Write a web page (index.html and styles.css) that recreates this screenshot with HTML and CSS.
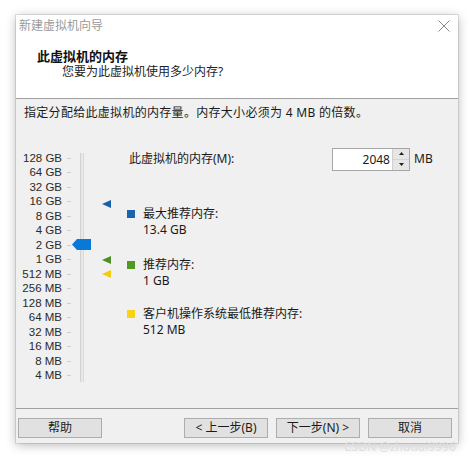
FILE: index.html
```html
<!DOCTYPE html>
<html lang="zh-CN">
<head>
<meta charset="utf-8">
<title>新建虚拟机向导</title>
<link rel="stylesheet" href="styles.css">
</head>
<body>
<div class="window">
  <div class="top">
    <div class="titlebar">
      <span class="title">新建虚拟机向导</span>
      <svg class="close" width="12" height="12" viewBox="0 0 12 12"><path d="M0.5 0.5 L11.5 11.5 M11.5 0.5 L0.5 11.5" stroke="#8a8a8a" stroke-width="1" fill="none"/></svg>
    </div>
    <div class="header">
      <div class="h1">此虚拟机的内存</div>
      <div class="h2">您要为此虚拟机使用多少内存?</div>
    </div>
  </div>
  <div class="body">
    <p class="intro">指定分配给此虚拟机的内存量。内存大小必须为 4 MB 的倍数。</p>
    <div class="main">
      <div class="scale">
        <ul class="labels">
          <li><span>128 GB</span></li>
          <li><span>64 GB</span></li>
          <li><span>32 GB</span></li>
          <li><span>16 GB</span></li>
          <li><span>8 GB</span></li>
          <li><span>4 GB</span></li>
          <li><span>2 GB</span></li>
          <li><span>1 GB</span></li>
          <li><span>512 MB</span></li>
          <li><span>256 MB</span></li>
          <li><span>128 MB</span></li>
          <li><span>64 MB</span></li>
          <li><span>32 MB</span></li>
          <li><span>16 MB</span></li>
          <li><span>8 MB</span></li>
          <li><span>4 MB</span></li>
        </ul>
        <div class="track"></div>
        <svg class="thumb" width="19" height="11" viewBox="0 0 19 11"><polygon points="0,5.5 5,0 19,0 19,11 5,11" fill="#0a78d6"/></svg>
        <svg class="mark mark-max" width="9" height="8" viewBox="0 0 9 8"><polygon points="0,4 9,0 9,8" fill="#1a5fa6"/></svg>
        <svg class="mark mark-rec" width="9" height="8" viewBox="0 0 9 8"><polygon points="0,4 9,0 9,8" fill="#4f8f22"/></svg>
        <svg class="mark mark-min" width="9" height="8" viewBox="0 0 9 8"><polygon points="0,4 9,0 9,8" fill="#f2cc12"/></svg>
      </div>
      <div class="info">
        <div class="memrow">
          <span class="memlabel">此虚拟机的内存(M):</span>
          <div class="spin">
            <span class="val">2048</span>
            <div class="btns">
              <span class="btn"><svg width="5" height="3" viewBox="0 0 5 3"><polygon points="0,3 2.5,0 5,3" fill="#222"/></svg></span>
              <span class="btn"><svg width="5" height="3" viewBox="0 0 5 3"><polygon points="0,0 5,0 2.5,3" fill="#222"/></svg></span>
            </div>
          </div>
          <span class="unit">MB</span>
        </div>
        <div class="legend l1"><span class="sq sq-blue"></span><span>最大推荐内存:</span><span class="v">13.4 GB</span></div>
        <div class="legend l2"><span class="sq sq-green"></span><span>推荐内存:</span><span class="v">1 GB</span></div>
        <div class="legend l3"><span class="sq sq-yellow"></span><span>客户机操作系统最低推荐内存:</span><span class="v">512 MB</span></div>
      </div>
    </div>
  </div>
  <div class="footer">
    <button class="b">帮助</button>
    <div class="nav">
      <button class="b">&lt; 上一步(B)</button>
      <button class="b">下一步(N) &gt;</button>
      <button class="b">取消</button>
    </div>
  </div>
</div>
<div class="watermark">CSDN @zhuuui9996</div>
</body>
</html>
```
FILE: styles.css
```css
html, body {
  margin: 0;
  padding: 0;
  background: #ffffff;
}
body {
  width: 474px;
  height: 462px;
  overflow: hidden;
  position: relative;
  font-family: "Noto Sans", "Noto Sans CJK SC", sans-serif;
  font-size: 12px;
  color: #1a1a1a;
}
.window {
  margin: 15px 0 0 16px;
  width: 442px;
  height: 428px;
  background: #f0f0f0;
  display: flex;
  flex-direction: column;
  box-shadow: 0 0 0 1px rgba(0,0,0,0.10), 0 2px 10px rgba(0,0,0,0.28);
  position: relative;
  z-index: 1;
}
.top {
  background: #ffffff;
  height: 84px;
  box-sizing: border-box;
  border-bottom: 1px solid #a0a0a0;
}
.titlebar {
  height: 22px;
  display: flex;
  align-items: center;
  justify-content: space-between;
  padding: 0 8px 0 3px;
}
.title {
  color: #9a9a9a;
  font-size: 12px;
  line-height: 16px;
}
.close {
  display: block;
}
.header {
  padding: 10px 0 0 21px;
}
.h1 {
  font-family: "Noto Sans CJK SC", sans-serif;
  font-weight: bold;
  font-size: 13px;
  line-height: 17px;
  color: #111;
}
.h2 {
  padding-left: 25px;
  line-height: 16px;
  color: #222;
}
.body {
  flex: 1;
}
.intro {
  margin: 0;
  padding: 6px 0 0 8px;
  line-height: 16px;
  letter-spacing: 0.3px;
}
.main {
  margin-top: 26px;
  display: flex;
}
.scale {
  position: relative;
  width: 111px;
  display: flex;
  align-items: flex-start;
}
.labels {
  list-style: none;
  margin: 0;
  padding: 3.75px 0 0 0;
  width: 55px;
  font-family: "Liberation Sans", Arial, sans-serif;
  font-size: 11.5px;
}
.labels li {
  height: 14.53px;
  display: flex;
  align-items: center;
  color: #2a2a2a;
}
.labels li span {
  width: 46px;
  text-align: right;
  line-height: 13px;
  white-space: nowrap;
}
.labels li::after {
  content: "";
  width: 4px;
  height: 1px;
  margin-left: 5px;
  background: #cfcfcf;
}
.track {
  margin: 5.7px 0 0 9px;
  width: 2px;
  height: 229px;
  background: #e8e8e8;
  border-left: 1px solid #d2d2d2;
  border-right: 1px solid #dadada;
}
.thumb {
  position: absolute;
  left: 56px;
  top: 92px;
}
.mark {
  position: absolute;
  left: 86px;
}
.mark-max { top: 53px; }
.mark-rec { top: 108.5px; }
.mark-min { top: 123px; }
.info {
  flex: 1;
  display: flex;
  flex-direction: column;
}
.memrow {
  height: 24px;
  display: flex;
  align-items: center;
}
.memlabel {
  margin-left: 2px;
  width: 203px;
  line-height: 16px;
}
.spin {
  width: 78px;
  height: 23px;
  box-sizing: border-box;
  border: 1px solid #a6a6a6;
  background: #ffffff;
  display: flex;
}
.val {
  flex: 1;
  text-align: right;
  padding-right: 2px;
  line-height: 21px;
}
.btns {
  width: 16px;
  display: flex;
  flex-direction: column;
  background: #e6e6e6;
  border-left: 1px solid #cfcfcf;
}
.btn {
  flex: 1;
  display: flex;
  align-items: center;
  justify-content: center;
}
.btn + .btn {
  border-top: 1px solid #d4d4d4;
}
.btn svg {
  display: block;
}
.unit {
  margin-left: 4px;
  line-height: 16px;
}
.legend {
  display: grid;
  grid-template-columns: 8px auto;
  column-gap: 8px;
  line-height: 15.5px;
}
.legend .sq {
  grid-row: 1;
  width: 8px;
  height: 8px;
  align-self: center;
  margin-top: 1px;
}
.legend .v {
  grid-column: 2;
}
.l1 { margin-top: 35px; }
.l2 { margin-top: 20px; }
.l3 { margin-top: 18px; }
.sq-blue { background: #1a63ad; }
.sq-green { background: #4e9a22; }
.sq-yellow { background: #fbd313; }
.footer {
  height: 35px;
  box-sizing: border-box;
  border-top: 1px solid #a0a0a0;
  display: flex;
  align-items: flex-start;
  padding: 9px 6px 0 2px;
}
.nav {
  margin-left: auto;
  display: flex;
  gap: 8px;
}
.b {
  width: 84px;
  height: 20px;
  margin: 0;
  padding: 0;
  border: 1px solid #adadad;
  background: #e1e1e1;
  font-family: "Noto Sans", "Noto Sans CJK SC", sans-serif;
  font-size: 12px;
  line-height: 18px;
  color: #1a1a1a;
}
.watermark {
  position: absolute;
  left: 344px;
  top: 440px;
  font-size: 12px;
  line-height: 14px;
  color: #dedede;
  z-index: 2;
  white-space: nowrap;
}
```
